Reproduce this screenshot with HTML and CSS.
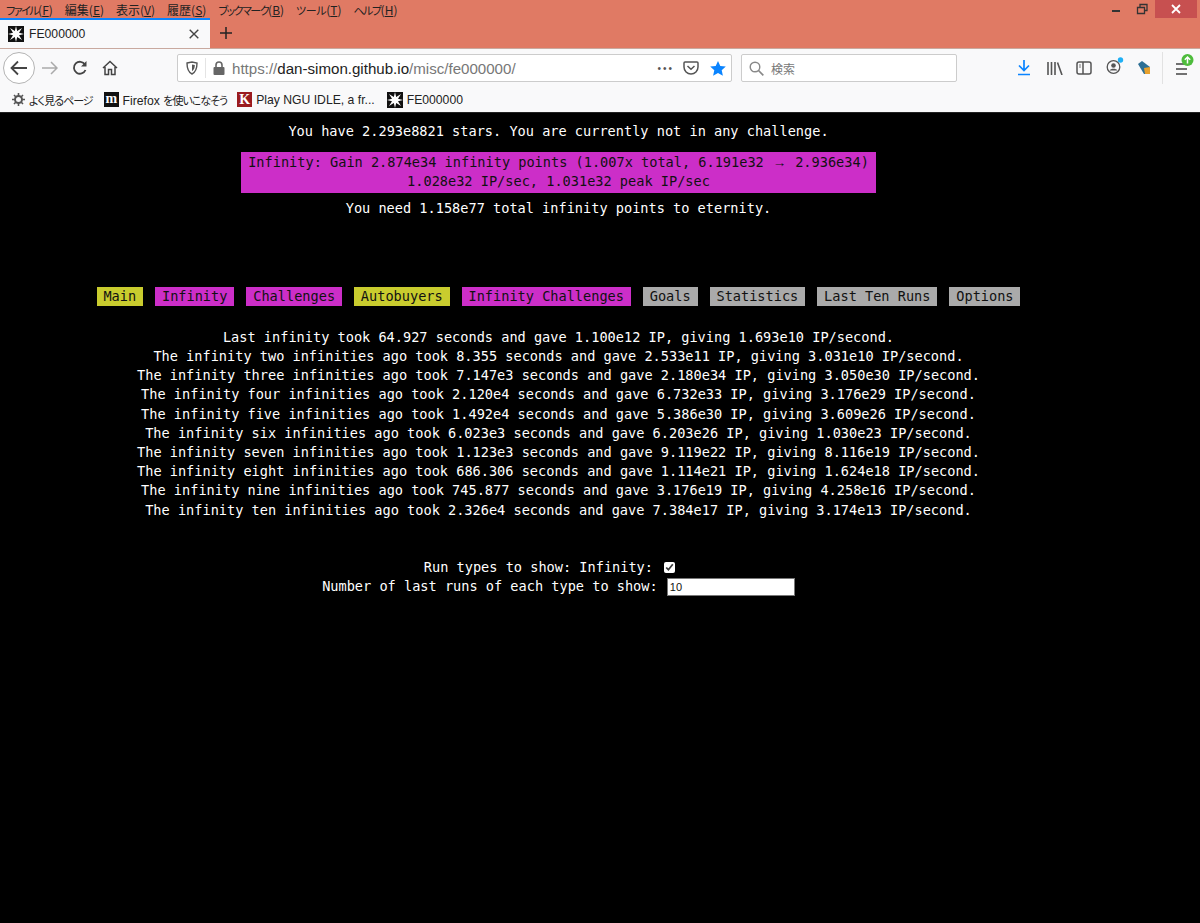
FILE: index.html
```html
<!DOCTYPE html>
<html lang="ja">
<head>
<meta charset="utf-8">
<title>FE000000</title>
<link rel="stylesheet" href="styles.css">
</head>
<body>
<header class="chrome">
  <div class="titlebar">
    <div class="menubar">
      <div class="menus">
        <span><span class="kana">ファイル</span>(<u>F</u>)</span><span>編集(<u>E</u>)</span><span>表示(<u>V</u>)</span><span>履歴(<u>S</u>)</span><span><span class="kana">ブックマーク</span>(<u>B</u>)</span><span><span class="kana-soft">ツール</span>(<u>T</u>)</span><span><span class="kana">ヘルプ</span>(<u>H</u>)</span>
      </div>
      <div class="winctl">
        <svg class="win-btn" width="26" height="18" viewBox="0 0 26 18"><path d="M9 11h8" stroke="#333" stroke-width="2"/></svg>
        <svg class="win-btn" width="26" height="18" viewBox="0 0 26 18"><path d="M8.500 7.500h7v6h-7z M11 7.500v-3h7v6h-2.500" fill="none" stroke="#333" stroke-width="1.300"/></svg>
        <div class="win-close"><svg width="10" height="10" viewBox="0 0 10 10"><path d="M1 1l8 8M9 1l-8 8" stroke="#fff" stroke-width="1.800"/></svg></div>
      </div>
    </div>
    <div class="tabstrip">
      <div class="tab">
        <svg class="fav" width="16" height="16" viewBox="0 0 16 16"><rect width="16" height="16" fill="#111"/><path d="M8 1l1.200 5 4.800-3-3 4.800 5 1.200-5 1.200 3 4.800-4.800-3L8 17l-1.200-5L2 15l3-4.800L0 9l5-1.200L2 3l4.800 3z" fill="#fff" transform="translate(0 -1)"/></svg>
        <span class="tab-title">FE000000</span>
        <svg class="tab-x" width="10" height="10" viewBox="0 0 10 10"><path d="M.7.7l8.600 8.600M9.300.7L.7 9.300" stroke="#444" stroke-width="1.400"/></svg>
      </div>
      <svg class="newtab" width="14" height="14" viewBox="0 0 14 14"><path d="M7 1v12M1 7h12" stroke="#222" stroke-width="1.500"/></svg>
    </div>
  </div>
  <div class="toolbar">
    <div class="back"><svg width="18" height="16" viewBox="0 0 18 16"><path d="M8 1.500L1.500 8 8 14.500M2 8h15" fill="none" stroke="#444" stroke-width="1.800"/></svg></div>
    <svg class="tb-ic fwd" width="16" height="14" viewBox="0 0 16 14"><path d="M9 1l6 6-6 6M15 7H0" fill="none" stroke="#aaa" stroke-width="1.500"/></svg>
    <svg class="tb-ic reload" width="16" height="16" viewBox="0 0 16 16"><path d="M13.500 10a6 6 0 1 1-.5-5.500" fill="none" stroke="#444" stroke-width="1.800"/><path d="M14.500 1v5.500H9z" fill="#444"/></svg>
    <svg class="tb-ic home" width="16" height="16" viewBox="0 0 16 16"><path d="M1 8l7-6.500L15 8M3 7v7.500h3.500v-5h3v5H13V7" fill="none" stroke="#444" stroke-width="1.500"/></svg>
    <div class="urlbar">
      <svg class="shield" width="12" height="14" viewBox="0 0 12 14"><path d="M1 2l5-1 5 1c0 5-1 9-5 11C2 11 1 7 1 2z" fill="none" stroke="#555" stroke-width="1.400"/><path d="M6 3.500l2.800.6C8.800 7 8 9 6 10.300z" fill="#555"/></svg>
      <span class="divider"></span>
      <svg class="lock" width="12" height="14" viewBox="0 0 12 14"><path d="M3 6V4a3 3 0 0 1 6 0v2" fill="none" stroke="#666" stroke-width="1.600"/><rect x="0.500" y="6" width="11" height="8" rx="1" fill="#666"/></svg>
      <span class="url"><span class="dim">https://</span>dan-simon.github.io<span class="dim">/misc/fe000000/</span></span>
      <span class="dots">•••</span>
      <svg class="pocket" width="16" height="14" viewBox="0 0 16 14"><path d="M1 2a1 1 0 0 1 1-1h12a1 1 0 0 1 1 1v4a7 7 0 0 1-14 0z" fill="none" stroke="#555" stroke-width="1.500"/><path d="M4.500 5L8 8.300 11.500 5" fill="none" stroke="#555" stroke-width="1.500"/></svg>
      <svg class="star" width="16" height="15" viewBox="0 0 16 15"><path d="M8 0l2.300 5 5.500.6-4.100 3.700 1.200 5.500L8 12l-4.900 2.800 1.200-5.500L.2 5.600 5.700 5z" fill="#0a84ff"/></svg>
    </div>
    <div class="searchbar">
      <svg width="15" height="15" viewBox="0 0 15 15"><circle cx="6" cy="6" r="4.800" fill="none" stroke="#888" stroke-width="1.400"/><path d="M9.500 9.500l4.800 4.800" stroke="#888" stroke-width="1.700"/></svg>
      <span>検索</span>
    </div>
    <div class="tools">
      <svg class="t-down" width="14" height="16" viewBox="0 0 14 16"><path d="M7 0v10M2 5.500L7 10.500 12 5.500M1 14.500h12" fill="none" stroke="#0a84ff" stroke-width="1.700"/></svg>
      <svg class="t-lib" width="16" height="13" viewBox="0 0 16 13"><path d="M1 0v13M4.500 0v13M8 0v13M10.500.5l4.500 12.500" fill="none" stroke="#555" stroke-width="1.600"/></svg>
      <svg class="t-side" width="16" height="14" viewBox="0 0 16 14"><rect x="1" y="1" width="14" height="12" rx="2" fill="none" stroke="#555" stroke-width="1.500"/><path d="M7 1v12" stroke="#555" stroke-width="1.500"/><path d="M3 4h2M3 6h2" stroke="#777"/></svg>
      <svg class="t-acct" width="18" height="18" viewBox="0 0 18 18"><circle cx="7.500" cy="10" r="6.300" fill="none" stroke="#555" stroke-width="1.300"/><circle cx="7.500" cy="8.500" r="2.300" fill="#555"/><path d="M3.500 13.500c1-2.500 7-2.500 8 0z" fill="#555"/><circle cx="14.500" cy="3" r="2.700" fill="#1fb0f5"/></svg>
      <svg class="t-ext" width="14" height="14" viewBox="0 0 14 14"><path d="M0 3l4-3 8 6v7H6z" fill="#2d6f94"/><path d="M6 7l6-1v7H7z" fill="#e8a12d"/></svg>
      <span class="t-sep"></span>
      <svg class="t-menu" width="20" height="24" viewBox="0 0 20 24"><path d="M1 11h11M1 16h11M1 21h11" stroke="#444" stroke-width="1.500"/><circle cx="12.500" cy="7" r="6" fill="#4ebc3c"/><path d="M12.500 10.500V4M9.800 6.700l2.700-2.700 2.700 2.700" fill="none" stroke="#fff" stroke-width="1.500"/></svg>
    </div>
  </div>
  <div class="bookmarks">
    <span class="bm bm-1"><svg width="13" height="13" viewBox="0 0 13 13"><circle cx="6.500" cy="6.500" r="3.500" fill="none" stroke="#555" stroke-width="2"/><path d="M6.500 0v2.500M6.500 10.500V13M0 6.500h2.500M10.500 6.500H13M2 2l1.700 1.700M9.300 9.300L11 11M2 11l1.700-1.700M9.300 3.700L11 2" stroke="#555" stroke-width="1.600"/></svg><span class="cjk">よく見るページ</span></span>
    <span class="bm bm-2"><span class="mdn">m</span><span>Firefox <span class="cjk">を使いこなそう</span></span></span>
    <span class="bm bm-3"><span class="kong">K</span>Play NGU IDLE, a fr...</span>
    <span class="bm bm-4"><svg width="16" height="16" viewBox="0 0 16 16"><rect width="16" height="16" fill="#111"/><path d="M8 1l1.200 5 4.800-3-3 4.800 5 1.200-5 1.200 3 4.800-4.800-3L8 17l-1.200-5L2 15l3-4.800L0 9l5-1.200L2 3l4.800 3z" fill="#fff" transform="translate(0 -1)"/></svg>FE000000</span>
  </div>
</header>
<main class="game">
  <p class="line">You have 2.293e8821 stars. You are currently not in any challenge.</p>
  <div class="prestige">
    <p class="line">Infinity: Gain 2.874e34 infinity points (1.007x total, 6.191e32 <span class="arrow">→</span> 2.936e34)</p>
    <p class="line">1.028e32 IP/sec, 1.031e32 peak IP/sec</p>
  </div>
  <p class="line need">You need 1.158e77 total infinity points to eternity.</p>
  <nav class="tabs">
    <span class="btn yellow">Main</span>
    <span class="btn magenta">Infinity</span>
    <span class="btn magenta">Challenges</span>
    <span class="btn yellow">Autobuyers</span>
    <span class="btn magenta">Infinity Challenges</span>
    <span class="btn grey">Goals</span>
    <span class="btn grey">Statistics</span>
    <span class="btn grey">Last Ten Runs</span>
    <span class="btn grey">Options</span>
  </nav>
  <div class="runs">
    <p class="line">Last infinity took 64.927 seconds and gave 1.100e12 IP, giving 1.693e10 IP/second.</p>
    <p class="line">The infinity two infinities ago took 8.355 seconds and gave 2.533e11 IP, giving 3.031e10 IP/second.</p>
    <p class="line">The infinity three infinities ago took 7.147e3 seconds and gave 2.180e34 IP, giving 3.050e30 IP/second.</p>
    <p class="line">The infinity four infinities ago took 2.120e4 seconds and gave 6.732e33 IP, giving 3.176e29 IP/second.</p>
    <p class="line">The infinity five infinities ago took 1.492e4 seconds and gave 5.386e30 IP, giving 3.609e26 IP/second.</p>
    <p class="line">The infinity six infinities ago took 6.023e3 seconds and gave 6.203e26 IP, giving 1.030e23 IP/second.</p>
    <p class="line">The infinity seven infinities ago took 1.123e3 seconds and gave 9.119e22 IP, giving 8.116e19 IP/second.</p>
    <p class="line">The infinity eight infinities ago took 686.306 seconds and gave 1.114e21 IP, giving 1.624e18 IP/second.</p>
    <p class="line">The infinity nine infinities ago took 745.877 seconds and gave 3.176e19 IP, giving 4.258e16 IP/second.</p>
    <p class="line">The infinity ten infinities ago took 2.326e4 seconds and gave 7.384e17 IP, giving 3.174e13 IP/second.</p>
  </div>
  <div class="options">
    <p class="line">Run types to show: Infinity: <input class="check" type="checkbox" checked></p>
    <p class="line">Number of last runs of each type to show: <input class="num" type="text" value="10"></p>
  </div>
</main>
</body>
</html>
```

FILE: styles.css
```css
* { box-sizing: border-box; }
html, body { margin: 0; padding: 0; }
body { width: 1200px; height: 923px; overflow: hidden; background: #000; font-family: "Noto Sans CJK JP", "Liberation Sans", sans-serif; }

.chrome { height: 113px; background: #f9f9fa; border-bottom: 1px solid #222; }
.titlebar { height: 49px; background: #e07a64; border-bottom: 1px solid #c9a99f; }
.menubar { height: 18px; display: flex; justify-content: space-between; }
.menus { display: flex; gap: 12px; padding-left: 6px; font-size: 12px; line-height: 19px; color: #222; font-feature-settings: "palt"; }
.kana { font-size: 11px; letter-spacing: -1.500px; }
.kana-soft { font-size: 11px; letter-spacing: -0.400px; }
.winctl { display: flex; padding-right: 3px; align-items: flex-start; }
.win-close { width: 42px; height: 18px; background: #c75050; display: flex; align-items: center; justify-content: center; }
.win-btn { display: block; }
.tabstrip { height: 30px; display: flex; align-items: center; }
.tab { width: 210px; height: 30px; background: #f9f9fa; border-top: 2px solid #0a84ff; display: flex; align-items: center; padding: 0 11px 0 8px; }
.fav { flex: none; }
.tab-title { flex: 1; margin-left: 5px; font-family: "Liberation Sans", sans-serif; font-size: 12.200px; color: #222; }
.newtab { margin-left: 9px; }

.toolbar { height: 38px; display: flex; align-items: center; }
.back { width: 32px; height: 32px; margin-left: 3px; border: 1px solid #b4b4b4; border-radius: 50%; background: #fff; display: flex; align-items: center; justify-content: center; }
.tb-ic { flex: none; }
.fwd { margin-left: 7px; }
.reload { margin-left: 14px; }
.home { margin-left: 14px; }
.urlbar { width: 555px; height: 28px; margin-left: 59px; background: #fff; border: 1px solid #ccc; border-radius: 2px; display: flex; align-items: center; padding: 0 5px 0 8px; }
.shield { flex: none; }
.divider { width: 1px; height: 20px; background: #e4e4e4; margin: 0 7px; }
.lock { flex: none; }
.url { flex: 1; margin-left: 7px; font-family: "Liberation Sans", sans-serif; font-size: 15.100px; color: #222; white-space: nowrap; }
.dim { color: #777; }
.dots { font-family: "Liberation Sans", sans-serif; font-size: 10px; color: #555; letter-spacing: 2px; margin-right: 9px; }
.pocket { margin-right: 11px; }
.searchbar { width: 216px; height: 28px; margin-left: 9px; background: #fff; border: 1px solid #ccc; border-radius: 2px; display: flex; align-items: center; gap: 7px; padding-left: 7px; font-size: 12px; color: #777; }
.tools { flex: 1; display: flex; align-items: center; height: 32px; padding-left: 60px; }
.t-lib { margin-left: 16px; }
.t-side { margin-left: 13px; }
.t-acct { margin-left: 14px; margin-top: -4px; }
.t-ext { margin-left: 14px; }
.t-sep { width: 1px; height: 32px; background: #e2e2e2; margin-left: 10px; }
.t-menu { margin-left: 12px; margin-top: -6px; }

.bookmarks { height: 25px; display: flex; align-items: center; font-size: 12.200px; color: #222; }
.bm { display: flex; align-items: center; gap: 4px; white-space: nowrap; font-family: "Liberation Sans", "Noto Sans CJK JP", sans-serif; font-feature-settings: "palt"; }
.cjk { font-size: 11px; letter-spacing: -1px; }
.bm-1 { margin-left: 12px; }
.bm-2 { margin-left: 11px; }
.bm-3 { margin-left: 10px; }
.bm-4 { margin-left: 12px; }
.mdn { width: 15px; height: 15px; background: #111; color: #fff; font-family: "Liberation Serif", serif; font-weight: 700; font-size: 14px; line-height: 13px; text-align: center; letter-spacing: -0.500px; }
.kong { width: 15px; height: 15px; background: #9a1b1f; color: #fff; font-family: "Liberation Serif", serif; font-weight: 700; font-size: 14px; line-height: 15px; text-align: center; }

.game { width: 1117px; padding-top: 9px; color: #fff; text-align: center; font-family: "DejaVu Sans Mono", monospace; font-size: 13.600px; line-height: 19.200px; }
.line { margin: 0; white-space: nowrap; }
.prestige { width: 635px; margin: 11px auto 0; padding: 1px 0; background: #cc2ec8; color: #111; }
.arrow { display: inline-block; width: 15px; font-family: "Liberation Sans", sans-serif; }
.need { margin-top: 6px; }
.tabs { margin-top: 69px; display: flex; justify-content: center; gap: 12px; color: #111; }
.btn { height: 19px; padding: 0 6.900px; line-height: 19px; white-space: nowrap; }
.yellow { background: #c9cc2e; }
.magenta { background: #cc2ec8; }
.grey { background: #aaa; }
.runs { margin-top: 22px; }
.options { margin-top: 38px; }
.check { width: 11px; height: 11px; margin: 0 18px 0 3px; vertical-align: -1px; accent-color: #fff; }
.num { width: 128px; height: 18px; margin: 0 0 0 1px; padding: 1px 2px; border: 1px solid #777; background: #fff; color: #111; font-family: "Liberation Sans", sans-serif; font-size: 11px; vertical-align: middle; }
```
